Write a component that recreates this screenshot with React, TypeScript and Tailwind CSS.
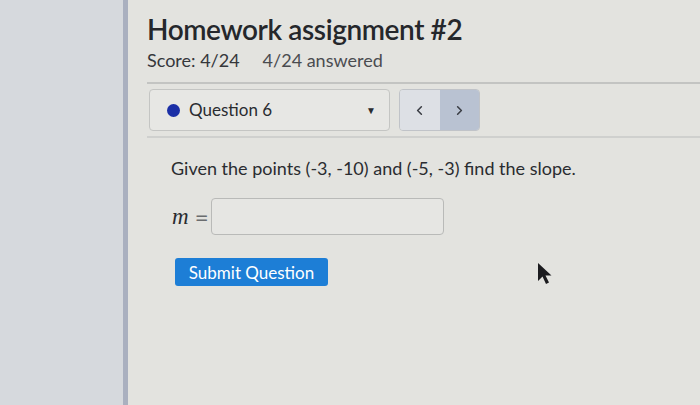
import React from "react";
import { ChevronLeft, ChevronRight } from "lucide-react";

function CursorArrow() {
  return (
    <svg width="18" height="24" viewBox="0 0 18 24" className="absolute left-[536px] top-[262px]">
      <path d="M2 1 L2 19 L6.5 14.5 L10 22 L13 20.5 L9.5 13.5 L15.5 13.5 Z" fill="#1c1c1f" />
    </svg>
  );
}

export default function App() {
  return (
    <div
      className="relative flex h-[405px] w-[700px] overflow-hidden bg-[#e3e3df] text-[#2a2c30]"
      style={{ fontFamily: "Lato, 'Open Sans', sans-serif" }}
    >
      {/* left sidebar */}
      <div className="h-full w-[123px] shrink-0 bg-[#d6d9dd]" />
      <div className="h-full w-[5px] shrink-0 bg-[#aab0bf]" />

      {/* main */}
      <div className="flex flex-1 flex-col pt-[11px] pl-[19px]">
        <h1 className="text-[28px] font-semibold leading-[36px] tracking-[-0.4px] text-[#25272b]">
          Homework assignment #2
        </h1>
        <div className="mt-[1px] flex gap-[23px] text-[18px] leading-[24px] text-[#35373b]">
          <span>Score: 4/24</span>
          <span className="text-[#4a4c50]">4/24 answered</span>
        </div>

        <div className="mt-[10px] border-t-2 border-[#c3c4c2]" />

        <div className="mt-[5px] flex items-center gap-[9px] pl-[2px]">
          <div className="flex h-[42px] w-[241px] items-center rounded-[4px] border border-[#c4c5c3] bg-[#e7e7e4] pl-[17px] pr-[13px]">
            <span className="h-[13px] w-[13px] rounded-full bg-[#1b2fa6]" />
            <span className="ml-[9px] flex-1 text-[17px] text-[#2a2c30]">Question 6</span>
            <span className="text-[10px] text-[#2a2c30]">▼</span>
          </div>
          <div className="flex h-[42px] w-[81px] overflow-hidden rounded-[4px] border border-[#c0c3c8]">
            <div className="flex flex-1 items-center justify-center bg-[#dde0e5] text-[#3a3d44]">
              <ChevronLeft size={15} strokeWidth={2.5} />
            </div>
            <div className="flex flex-1 items-center justify-center bg-[#b9c2d2] text-[#3a3d44]">
              <ChevronRight size={15} strokeWidth={2.5} />
            </div>
          </div>
        </div>

        <div className="mt-[5px] border-t-2 border-[#cfd0ce]" />

        <div className="pl-[24px]">
          <p className="mt-[18px] text-[18px] leading-[24px] text-[#2a2c30]">
            Given the points (-3, -10) and (-5, -3) find the slope.
          </p>

          <div className="mt-[18px] flex items-center">
            <span
              className="ml-[1px] text-[23px] italic leading-none text-[#2a2c30]"
              style={{ fontFamily: "'Liberation Serif', serif" }}
            >
              m
            </span>
            <span className="ml-[6px] text-[24px] leading-none text-[#6a6c6e]">=</span>
            <div className="ml-[2px] h-[37px] w-[233px] rounded-[4px] border border-[#b9bab8] bg-[#e6e6e3]" />
          </div>

          <button className="mt-[23px] ml-[4px] h-[28px] w-[153px] rounded-[3px] bg-[#1d7ed6] text-[17px] leading-none text-white">
            Submit Question
          </button>
        </div>
      </div>

      <CursorArrow />
    </div>
  );
}
